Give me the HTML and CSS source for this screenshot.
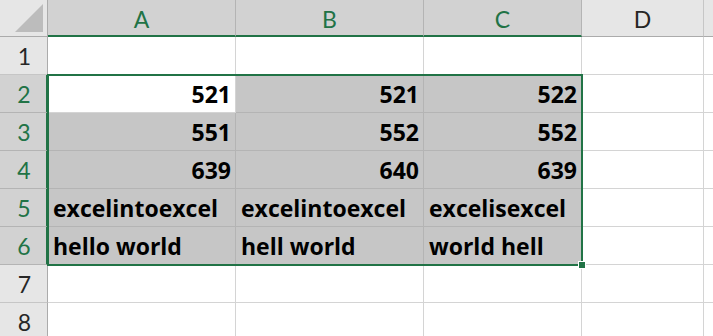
FILE: index.html
```html
<!DOCTYPE html>
<html lang="en">
<head>
  <meta charset="UTF-8">
  <title>Sheet</title>
  <link rel="stylesheet" href="styles.css">
</head>
<body>
  <div class="sheet">
    <div class="corner"><span class="tri"></span></div>
    <div class="colhead sel">A</div>
    <div class="colhead sel">B</div>
    <div class="colhead sel">C</div>
    <div class="colhead">D</div>
    <div class="colhead"></div>

    <div class="rowhead">1</div>
    <div class="cell"></div><div class="cell"></div><div class="cell"></div><div class="cell"></div><div class="cell"></div>

    <div class="rowhead sel">2</div>
    <div class="cell num active">521</div><div class="cell num fill">521</div><div class="cell num fill">522</div><div class="cell"></div><div class="cell"></div>

    <div class="rowhead sel">3</div>
    <div class="cell num fill">551</div><div class="cell num fill">552</div><div class="cell num fill">552</div><div class="cell"></div><div class="cell"></div>

    <div class="rowhead sel">4</div>
    <div class="cell num fill">639</div><div class="cell num fill">640</div><div class="cell num fill">639</div><div class="cell"></div><div class="cell"></div>

    <div class="rowhead sel">5</div>
    <div class="cell fill">excelintoexcel</div><div class="cell fill">excelintoexcel</div><div class="cell fill">excelisexcel</div><div class="cell"></div><div class="cell"></div>

    <div class="rowhead sel">6</div>
    <div class="cell fill">hello world</div><div class="cell fill">hell world</div><div class="cell fill">world hell</div><div class="cell"></div><div class="cell"></div>

    <div class="rowhead">7</div>
    <div class="cell"></div><div class="cell"></div><div class="cell"></div><div class="cell"></div><div class="cell"></div>

    <div class="rowhead">8</div>
    <div class="cell"></div><div class="cell"></div><div class="cell"></div><div class="cell"></div><div class="cell"></div>

    <div class="selection"><span class="handle"></span></div>
  </div>
</body>
</html>
```
FILE: styles.css
```css
body {
  margin: 0;
  background: #fff;
  overflow: hidden;
  font-family: Lato, "Open Sans", sans-serif;
}
.sheet {
  position: relative;
  display: grid;
  grid-template-columns: 48px 188px 188px 158px 122px 40px;
  grid-template-rows: 37px repeat(8, 38px);
  width: 744px;
}
.corner {
  position: relative;
  background: #e6e6e6;
  border-right: 1px solid #ababab;
  border-bottom: 1px solid #ababab;
  box-sizing: border-box;
}
.tri {
  position: absolute;
  right: 4px;
  bottom: 4px;
  width: 0;
  height: 0;
  border-left: 28px solid transparent;
  border-bottom: 28px solid #bcbcbc;
}
.colhead {
  background: #e6e6e6;
  border-right: 1px solid #c6c6c6;
  border-bottom: 1px solid #ababab;
  box-sizing: border-box;
  display: flex;
  align-items: center;
  justify-content: center;
  font-size: 23px;
  color: #262626;
  padding-top: 1px;
}
.colhead.sel {
  background: #d2d2d2;
  color: #217346;
  border-right-color: #b4b4b4;
  border-bottom: 2px solid #217346;
  padding-top: 2px;
}
.rowhead {
  background: #e6e6e6;
  border-right: 1px solid #ababab;
  border-bottom: 1px solid #c6c6c6;
  box-sizing: border-box;
  display: flex;
  align-items: center;
  justify-content: center;
  font-size: 23px;
  color: #262626;
  padding-left: 2px;
}
.rowhead.sel {
  background: #d2d2d2;
  color: #217346;
  border-right: 2px solid #217346;
  border-bottom-color: #b4b4b4;
}
.cell {
  border-right: 1px solid #d4d4d4;
  border-bottom: 1px solid #d4d4d4;
  box-sizing: border-box;
  display: flex;
  align-items: center;
  padding: 0 4px 0 5px;
  font-family: "Open Sans", sans-serif;
  font-size: 23px;
  font-weight: bold;
  color: #000;
  white-space: nowrap;
  overflow: hidden;
}
.cell.num {
  justify-content: flex-end;
}
.cell.fill {
  background: #c6c6c6;
  border-color: #b4b4b4;
}
.cell.active {
  background: #fff;
}
.selection {
  position: absolute;
  left: 47px;
  top: 74px;
  width: 536px;
  height: 192px;
  border: 2px solid #217346;
  box-sizing: border-box;
  pointer-events: none;
}
.handle {
  position: absolute;
  right: -5px;
  bottom: -5px;
  width: 6px;
  height: 6px;
  background: #217346;
  border: 1px solid #fff;
}
```
